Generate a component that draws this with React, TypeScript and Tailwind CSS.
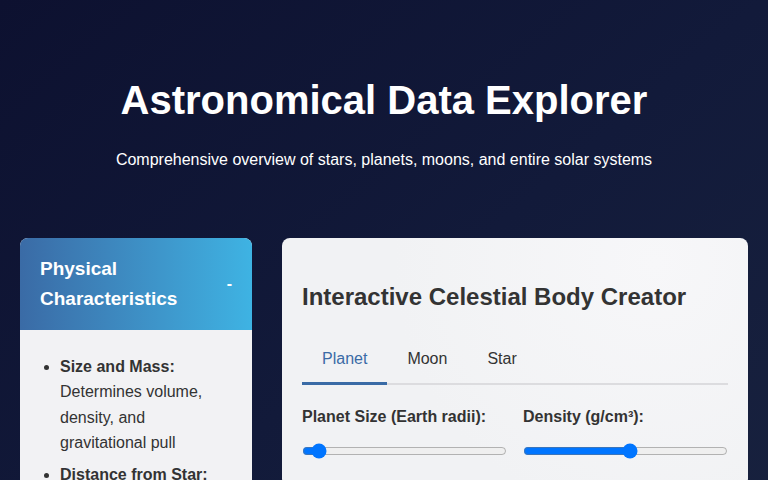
import { useState } from 'react';

const tabs = ['Planet', 'Moon', 'Star'];

export default function App() {
  const [active, setActive] = useState('Planet');
  const [size, setSize] = useState(1);
  const [density, setDensity] = useState(5.5);

  return (
    <div className="min-h-screen bg-gradient-to-br from-[#0d1130] via-[#121a3a] to-[#19233f] font-['Liberation_Sans',Arial,sans-serif] text-base leading-[1.6] text-[#333]">
      {/* HEADER */}
      <header className="pt-[68px] pb-[65px] text-center text-white">
        <h1 className="text-[40px] font-bold leading-[64px] mb-[15px]">Astronomical Data Explorer</h1>
        <p className="leading-[1.6]">Comprehensive overview of stars, planets, moons, and entire solar systems</p>
      </header>

      <main className="flex items-start gap-[30px] px-5">
        {/* SIDEBAR CARD */}
        <section className="w-[232px] shrink-0 rounded-lg overflow-hidden bg-[#f2f2f4]">
          <div className="flex items-center justify-between px-5 py-4 bg-gradient-to-r from-[#3a6ba6] to-[#3eb3e3] text-white">
            <h3 className="text-[19px] font-bold leading-[30px]">Physical Characteristics</h3>
            <span className="font-bold">-</span>
          </div>
          <ul className="list-disc pl-10 pr-5 pt-6 pb-5 leading-[1.6]">
            <li className="mb-1.5"><strong>Size and Mass:</strong> Determines volume, density, and gravitational pull</li>
            <li className="mb-1.5"><strong>Distance from Star:</strong> Affects temperature and orbital period</li>
            <li className="mb-1.5"><strong>Composition:</strong> Rocky, gaseous, or icy materials</li>
          </ul>
        </section>

        {/* CREATOR CARD */}
        <section className="flex-1 rounded-lg bg-[radial-gradient(circle_at_80%_10%,#f7f7f9,#f1f2f4_60%)] px-5 pb-5 pt-5">
          <h2 className="text-2xl font-bold mt-5 mb-5 leading-[1.6]">Interactive Celestial Body Creator</h2>
          <div className="flex border-b-2 border-[#dcdcdf] mb-[19px]">
            {tabs.map((t) => (
              <button
                key={t}
                onClick={() => setActive(t)}
                className={
                  t === active
                    ? 'px-5 py-2.5 -mb-[2px] border-b-[3px] border-[#3a6ba6] text-[#3a6ba6] leading-[1.6]'
                    : 'px-5 py-2.5 -mb-[2px] border-b-[3px] border-transparent text-[#333] leading-[1.6]'
                }
              >
                {t}
              </button>
            ))}
          </div>
          <div className="grid grid-cols-2 gap-4">
            <div>
              <label className="block font-bold mb-3 leading-[1.6]">Planet Size (Earth radii):</label>
              <input
                type="range"
                min={0.1}
                max={20}
                step={0.1}
                value={size}
                onChange={(e) => setSize(Number(e.target.value))}
                className="w-full"
              />
            </div>
            <div>
              <label className="block font-bold mb-3 leading-[1.6]">Density (g/cm³):</label>
              <input
                type="range"
                min={0.5}
                max={10}
                step={0.1}
                value={density}
                onChange={(e) => setDensity(Number(e.target.value))}
                className="w-full"
              />
            </div>
          </div>
        </section>
      </main>
    </div>
  );
}
